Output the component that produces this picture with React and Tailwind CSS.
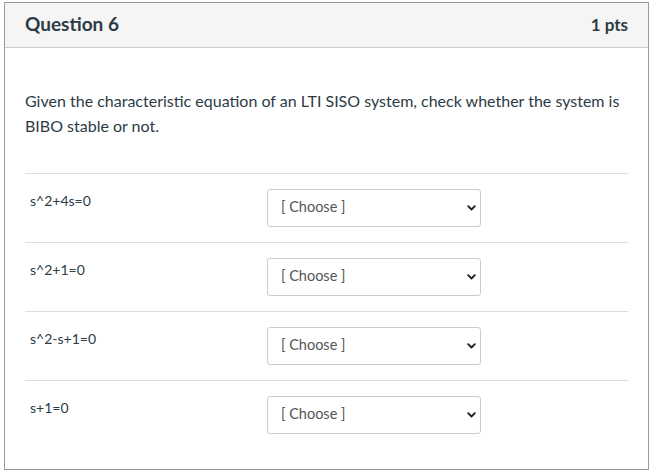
const rows = ["s^2+4s=0", "s^2+1=0", "s^2-s+1=0", "s+1=0"];

function ChooseBox() {
  return (
    <div className="flex items-center justify-between w-[214px] h-[38px] border border-[#c7cdd1] rounded-[3px] bg-white pl-[13px] pr-[4px]">
      <span className="text-[14.5px] text-[#555] pb-[2px]">[ Choose ]</span>
      <svg width="9" height="6" viewBox="0 0 9 6" fill="none">
        <path d="M1.2 1.2 L4.5 4.5 L7.8 1.2" stroke="#222" strokeWidth="1.9" strokeLinecap="round" strokeLinejoin="round" />
      </svg>
    </div>
  );
}

export default function App() {
  return (
    <div className="bg-white w-[663px] h-[470px] pt-[2px] pl-[4px]" style={{ fontFamily: "Lato, 'Noto Sans', sans-serif" }}>
      <div className="w-[645px] h-[468px] border border-[#9b9b9b] text-[#2d3b45]">
        <div className="flex items-center justify-between h-[45px] bg-[#f5f5f5] border-b border-[#c7cdd1] px-[20px]">
          <h2 className="text-[19px] font-bold leading-none pb-[4px]">Question 6</h2>
          <span className="text-[17px] font-bold leading-none pb-[2px]">1 pts</span>
        </div>
        <div className="px-[20px] pt-[40px]">
          <p className="text-[16px] leading-[25px] mb-[35px]">
            Given the characteristic equation of an LTI SISO system, check whether the system is BIBO stable or not.
          </p>
          {rows.map((r) => (
            <div key={r} className="flex items-start border-t border-[#dcdfe2] py-[15px]">
              <div className="w-[242px] pl-[5px] pt-[4px] text-[14px] leading-[16px]">{r}</div>
              <ChooseBox />
            </div>
          ))}
        </div>
      </div>
    </div>
  );
}
